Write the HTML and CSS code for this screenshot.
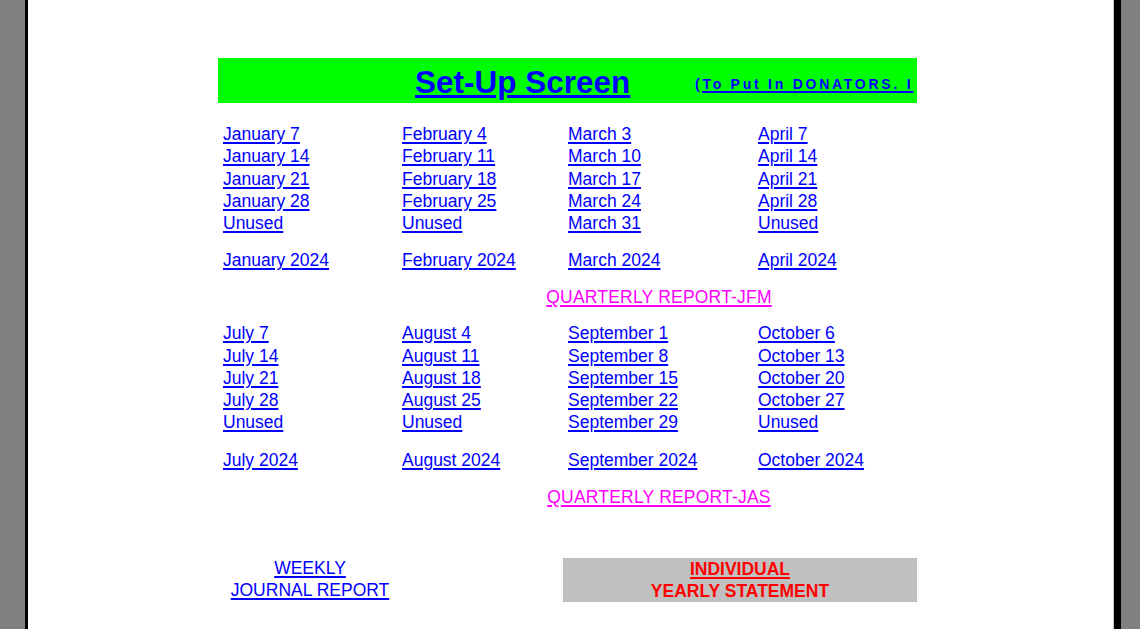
FILE: index.html
```html
<!DOCTYPE html>
<html lang="en">
<head>
<meta charset="utf-8">
<title>Set-Up Screen</title>
<link rel="stylesheet" href="styles.css">
</head>
<body>
<div class="desk">
  <div class="page">
    <div class="sheet">
      <div class="title-bar">
        <div class="title-cell"><a class="title" href="#">Set-Up Screen</a></div>
        <div class="sub-cell"><a class="sub" href="#">(To Put In DONATORS. I</a></div>
      </div>

      <div class="grid weeks">
        <a href="#">January 7</a><a href="#">February 4</a><a href="#">March 3</a><a href="#">April 7</a>
        <a href="#">January 14</a><a href="#">February 11</a><a href="#">March 10</a><a href="#">April 14</a>
        <a href="#">January 21</a><a href="#">February 18</a><a href="#">March 17</a><a href="#">April 21</a>
        <a href="#">January 28</a><a href="#">February 25</a><a href="#">March 24</a><a href="#">April 28</a>
        <a href="#">Unused</a><a href="#">Unused</a><a href="#">March 31</a><a href="#">Unused</a>
      </div>
      <div class="grid months">
        <a href="#">January 2024</a><a href="#">February 2024</a><a href="#">March 2024</a><a href="#">April 2024</a>
      </div>
      <div class="grid quarter">
        <div class="q-cell"><a class="q" href="#">QUARTERLY REPORT-JFM</a></div>
      </div>

      <div class="grid weeks second">
        <a href="#">July 7</a><a href="#">August 4</a><a href="#">September 1</a><a href="#">October 6</a>
        <a href="#">July 14</a><a href="#">August 11</a><a href="#">September 8</a><a href="#">October 13</a>
        <a href="#">July 21</a><a href="#">August 18</a><a href="#">September 15</a><a href="#">October 20</a>
        <a href="#">July 28</a><a href="#">August 25</a><a href="#">September 22</a><a href="#">October 27</a>
        <a href="#">Unused</a><a href="#">Unused</a><a href="#">September 29</a><a href="#">Unused</a>
      </div>
      <div class="grid months">
        <a href="#">July 2024</a><a href="#">August 2024</a><a href="#">September 2024</a><a href="#">October 2024</a>
      </div>
      <div class="grid quarter">
        <div class="q-cell"><a class="q" href="#">QUARTERLY REPORT-JAS</a></div>
      </div>

      <div class="grid bottom">
        <div class="weekly"><a href="#">WEEKLY</a><br><a href="#">JOURNAL REPORT</a></div>
        <div class="statement">
          <a class="ind" href="#">INDIVIDUAL</a><br><span class="yearly">YEARLY STATEMENT</span>
        </div>
      </div>
    </div>
  </div>
</div>
</body>
</html>
```

FILE: styles.css
```css
html, body {
  margin: 0;
  padding: 0;
  background: #808080;
  height: 100%;
  overflow: hidden;
}

.desk {
  display: flex;
  height: 629px;
  padding-left: 25px;
}

.page {
  width: 1086px;
  height: 629px;
  background: #ffffff;
  border-left: 3px solid #000000;
  border-right: 7px solid #000000;
  box-shadow: inset -1px 0 0 #c8c8c8;
  overflow: hidden;
}

.sheet {
  margin-left: 190px;
  width: 699px;
  padding-top: 58px;
  font-family: "Liberation Sans", Arial, sans-serif;
  font-size: 17.5px;
}

a {
  color: #0000ff;
  text-decoration: underline;
  text-decoration-thickness: 2px;
  text-underline-offset: 2px;
  white-space: nowrap;
}

.title-bar {
  display: flex;
  height: 45px;
  background: #00ff00;
  white-space: nowrap;
}

.title-cell {
  width: 280px;
  flex: none;
  padding-left: 197px;
  line-height: 45px;
  padding-top: 2px;
}

.title {
  font-weight: bold;
  font-size: 31.5px;
  letter-spacing: 0;
  text-decoration-thickness: 2.5px;
}

.sub-cell {
  flex: 1;
  min-width: 0;
  line-height: 45px;
  padding-top: 3px;
}

.sub {
  font-weight: bold;
  font-size: 14px;
  letter-spacing: 2.75px;
  text-decoration-thickness: 1.5px;
}

.grid {
  display: grid;
  grid-template-columns: 179px 166px 190px 164px;
  line-height: 22.25px;
}

.grid > a {
  justify-self: start;
  margin-left: 5px;
}

.weeks {
  margin-top: 20px;
}

.weeks.second {
  margin-top: 14px;
}

.months {
  margin-top: 15px;
  line-height: 22px;
}

.quarter {
  margin-top: 15px;
  line-height: 22px;
}

.q-cell {
  grid-column: 3;
  display: flex;
  justify-content: center;
}

.q {
  color: #ff00ff;
  flex: none;
  letter-spacing: 0.2px;
  margin-left: 2px;
}

.bottom {
  margin-top: 50px;
  line-height: 22px;
}

.weekly {
  grid-column: 1;
  text-align: center;
  padding-left: 5px;
  margin-top: -1px;
}

.statement {
  grid-column: 3 / span 2;
  height: 44px;
  background: #c0c0c0;
  text-align: center;
  color: #ff0000;
  font-weight: bold;
}

.ind {
  color: #ff0000;
}

.yearly {
  color: #ff0000;
}
```
